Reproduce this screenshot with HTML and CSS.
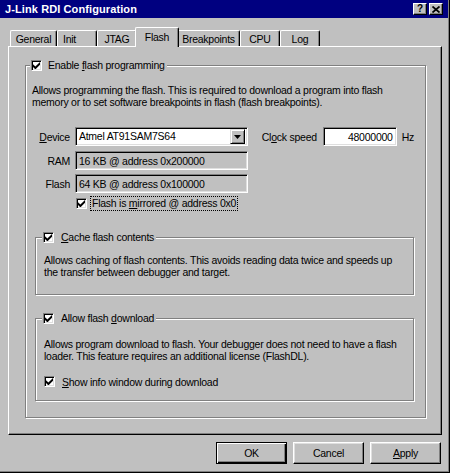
FILE: index.html
```html
<!DOCTYPE html>
<html>
<head>
<meta charset="utf-8">
<title>J-Link RDI Configuration</title>
<link rel="stylesheet" href="styles.css">
</head>
<body>
<div class="window">
  <div class="titlebar">
    <span class="title">J-Link RDI Configuration</span>
    <div class="caption-buttons">
      <span class="cbtn help">?</span>
      <span class="cbtn close"><svg width="8" height="7" viewBox="0 0 8 7"><path d="M0.5 0.5 L7.5 6.5 M7.5 0.5 L0.5 6.5" stroke="#000" stroke-width="1.7"/></svg></span>
    </div>
  </div>

  <div class="tabs">
    <div class="tab t-general">General</div>
    <div class="tab t-init">Init</div>
    <div class="tab t-jtag">JTAG</div>
    <div class="tab t-flash selected">Flash</div>
    <div class="tab t-bp">Breakpoints</div>
    <div class="tab t-cpu">CPU</div>
    <div class="tab t-log">Log</div>
  </div>

  <div class="panel">
    <fieldset class="group outer">
      <legend class="legend">
        <span class="chk"><svg width="7" height="7" viewBox="0 0 7 7"><path d="M0 2.2 L2.4 4.6 L7 0 V2.8 L2.4 7.4 L0 5 Z" fill="#000"/></svg></span>
        <span class="chk-text">Enable <u>f</u>lash programming</span>
      </legend>
      <p class="desc">Allows programming the flash. This is required to download a program into flash<br>memory or to set software breakpoints in flash (flash breakpoints).</p>

      <div class="form">
        <div class="row">
          <span class="lbl"><u>D</u>evice</span>
          <div class="combo">
            <span class="combo-text">Atmel AT91SAM7S64</span>
            <span class="drop"><svg width="7" height="4" viewBox="0 0 7 4"><path d="M0 0 H7 L3.5 4 Z" fill="#000"/></svg></span>
          </div>
          <span class="lbl2">Cl<u>o</u>ck speed</span>
          <div class="edit num">48000000</div>
          <span class="unit">Hz</span>
        </div>
        <div class="row r2">
          <span class="lbl">RAM</span>
          <div class="edit ro">16 KB @ address 0x200000</div>
        </div>
        <div class="row r3">
          <span class="lbl">Flash</span>
          <div class="edit ro">64 KB @ address 0x100000</div>
        </div>
        <div class="mirror">
          <span class="chk"><svg width="7" height="7" viewBox="0 0 7 7"><path d="M0 2.2 L2.4 4.6 L7 0 V2.8 L2.4 7.4 L0 5 Z" fill="#000"/></svg></span>
          <span class="focus">Flash is <u>m</u>irrored @ address 0x0</span>
        </div>
      </div>

      <fieldset class="group inner cache">
        <legend class="legend">
          <span class="chk"><svg width="7" height="7" viewBox="0 0 7 7"><path d="M0 2.2 L2.4 4.6 L7 0 V2.8 L2.4 7.4 L0 5 Z" fill="#000"/></svg></span>
          <span class="chk-text"><u>C</u>ache flash contents</span>
        </legend>
        <p class="desc">Allows caching of flash contents. This avoids reading data twice and speeds up<br>the transfer between debugger and target.</p>
      </fieldset>

      <fieldset class="group inner download">
        <legend class="legend">
          <span class="chk"><svg width="7" height="7" viewBox="0 0 7 7"><path d="M0 2.2 L2.4 4.6 L7 0 V2.8 L2.4 7.4 L0 5 Z" fill="#000"/></svg></span>
          <span class="chk-text">Allow flash <u>d</u>ownload</span>
        </legend>
        <p class="desc">Allows program download to flash. Your debugger does not need to have a flash<br>loader. This feature requires an additional license (FlashDL).</p>
        <div class="check-row">
          <span class="chk"><svg width="7" height="7" viewBox="0 0 7 7"><path d="M0 2.2 L2.4 4.6 L7 0 V2.8 L2.4 7.4 L0 5 Z" fill="#000"/></svg></span>
          <span class="chk-text"><u>S</u>how info window during download</span>
        </div>
      </fieldset>
    </fieldset>
  </div>

  <div class="buttons">
    <div class="btn default"><span>OK</span></div>
    <div class="btn"><span>Cancel</span></div>
    <div class="btn"><span><u>A</u>pply</span></div>
  </div>
</div>
</body>
</html>
```

FILE: styles.css
```css
html, body {
  margin: 0;
  padding: 0;
  background: #c0c0c0;
}

body {
  font-family: "Liberation Sans", Arial, sans-serif;
  font-size: 10.5px;
  letter-spacing: -0.25px;
  color: #000;
}

u {
  text-decoration: underline;
  text-underline-offset: 1px;
}

.window {
  width: 450px;
  height: 473px;
  box-sizing: border-box;
  display: flex;
  flex-direction: column;
  background: #c0c0c0;
  box-shadow: inset -1px -1px 0 #000, inset -2px -2px 0 #808080;
}

/* ---------- title bar ---------- */
.titlebar {
  height: 18px;
  margin-right: 2px;
  background: #000080;
  color: #fff;
  display: flex;
  align-items: center;
  justify-content: space-between;
  padding: 0 5px 0 5px;
}

.title {
  font-weight: bold;
  font-size: 11px;
  letter-spacing: 0.1px;
}

.caption-buttons {
  display: flex;
  gap: 2px;
}

.cbtn {
  width: 14px;
  height: 12px;
  box-sizing: border-box;
  background: #c0c0c0;
  border-top: 1px solid #fff;
  border-left: 1px solid #fff;
  border-right: 1px solid #000;
  border-bottom: 1px solid #000;
  box-shadow: inset -1px -1px 0 #808080;
  display: flex;
  align-items: center;
  justify-content: center;
  color: #000;
}

.help {
  font-weight: bold;
  font-size: 10px;
  line-height: 10px;
  letter-spacing: 0;
}

/* ---------- tabs ---------- */
.tabs {
  display: flex;
  align-items: flex-end;
  margin-top: 9px;
  padding-left: 10px;
  height: 19px;
}

.tab {
  height: 16px;
  box-sizing: border-box;
  border-top: 1px solid #fff;
  border-left: 1px solid #fff;
  border-right: 1px solid #000;
  box-shadow: inset -1px 0 0 #808080;
  border-radius: 2px 2px 0 0;
  display: flex;
  align-items: center;
  justify-content: center;
  background: #c0c0c0;
  white-space: nowrap;
}

.t-general { width: 47px; }
.t-init { width: 40px; justify-content: flex-start; padding-left: 5px; }
.t-jtag { width: 40px; }
.t-flash { width: 44px; }
.t-bp { width: 63px; }
.t-cpu { width: 40px; }
.t-log { width: 40px; }

.tab.selected {
  height: 20px;
  margin: 0 -2px -1px -2px;
  position: relative;
  z-index: 1;
  padding-bottom: 1px;
}

/* ---------- panel ---------- */
.panel {
  margin-left: 8px;
  width: 434px;
  height: 389px;
  box-sizing: border-box;
  border-top: 1px solid #fff;
  border-left: 1px solid #fff;
  border-right: 1px solid #000;
  border-bottom: 1px solid #000;
  box-shadow: inset -1px -1px 0 #808080;
  padding: 12px 15px 0 16px;
}

/* ---------- group boxes ---------- */
.group {
  margin: 0;
  min-inline-size: 0;
  border: 1px solid #808080;
  box-shadow: inset 1px 1px 0 #fff, 1px 1px 0 #fff;
}

.legend {
  display: flex;
  align-items: center;
  height: 13px;
  line-height: 13px;
  margin-left: -2px;
  padding: 0 2px 0 1px;
  background: #c0c0c0;
}

.outer {
  padding: 12px 11px 16px 6px;
}

.inner {
  margin-left: 3px;
  padding-left: 8px;
  padding-right: 8px;
}

.cache {
  margin-top: 20px;
  padding-top: 10px;
  padding-bottom: 16px;
}

.download {
  margin-top: 17px;
  padding-top: 13px;
  padding-bottom: 12px;
}

.desc {
  margin: 0;
  line-height: 12px;
  white-space: nowrap;
}

/* ---------- checkbox ---------- */
.chk {
  width: 11px;
  height: 11px;
  box-sizing: border-box;
  flex: none;
  background: #fff;
  border-top: 1px solid #808080;
  border-left: 1px solid #808080;
  border-right: 1px solid #fff;
  border-bottom: 1px solid #fff;
  box-shadow: inset 1px 1px 0 #000, inset -1px -1px 0 #dfdfdf;
  display: flex;
  align-items: center;
  justify-content: center;
}

.chk svg {
  display: block;
}

.outer > .legend .chk-text {
  margin-left: 6px;
}

.inner .chk-text {
  margin-left: 7px;
}

.check-row {
  display: flex;
  align-items: center;
  height: 13px;
  margin-top: 13px;
}

/* ---------- form ---------- */
.form {
  margin-top: 19px;
}

.row {
  display: flex;
  align-items: center;
  height: 19px;
}

.r2 { margin-top: 5px; }
.r3 { margin-top: 4px; }

.lbl {
  width: 38px;
  text-align: right;
  margin-right: 5px;
  white-space: nowrap;
}

.lbl2 {
  width: 56px;
  margin-left: 14px;
  margin-right: 5px;
  white-space: nowrap;
}

.unit {
  margin-left: 5px;
}

.combo,
.edit {
  height: 19px;
  box-sizing: border-box;
  border-top: 1px solid #808080;
  border-left: 1px solid #808080;
  border-right: 1px solid #fff;
  border-bottom: 1px solid #fff;
  box-shadow: inset 1px 1px 0 #000, inset -1px -1px 0 #dfdfdf;
  display: flex;
  align-items: center;
  white-space: nowrap;
}

.combo {
  width: 173px;
  background: #fff;
  padding: 2px 2px 2px 3px;
  justify-content: space-between;
}

.combo-text {
  line-height: 13px;
}

.drop {
  width: 15px;
  height: 15px;
  box-sizing: border-box;
  background: #c0c0c0;
  border-top: 1px solid #dfdfdf;
  border-left: 1px solid #dfdfdf;
  border-right: 1px solid #000;
  border-bottom: 1px solid #000;
  box-shadow: inset 1px 1px 0 #fff, inset -1px -1px 0 #808080;
  display: flex;
  align-items: center;
  justify-content: center;
}

.edit {
  padding: 0 3px;
}

.edit.ro {
  width: 173px;
  background: #c0c0c0;
}

.edit.num {
  width: 74px;
  background: #fff;
  justify-content: flex-end;
}

.mirror {
  display: flex;
  align-items: center;
  height: 15px;
  margin-top: 3px;
  margin-left: 44px;
}

.focus {
  margin-left: 3px;
  padding: 0 2px;
  height: 15px;
  line-height: 15px;
  box-sizing: border-box;
  outline: 1px dotted #000;
  outline-offset: -1px;
  white-space: nowrap;
}

/* ---------- buttons ---------- */
.buttons {
  display: flex;
  justify-content: flex-end;
  gap: 6px;
  margin-top: 7px;
  padding-right: 9px;
}

.btn {
  width: 71px;
  height: 22px;
  box-sizing: border-box;
  background: #c0c0c0;
  border-top: 1px solid #fff;
  border-left: 1px solid #fff;
  border-right: 1px solid #000;
  border-bottom: 1px solid #000;
  box-shadow: inset -1px -1px 0 #808080, inset 1px 1px 0 #dfdfdf;
  display: flex;
  align-items: center;
  justify-content: center;
}

.btn.default {
  border: 1px solid #000;
  box-shadow: inset 1px 1px 0 #fff, inset -1px -1px 0 #000, inset -2px -2px 0 #808080;
}
```
